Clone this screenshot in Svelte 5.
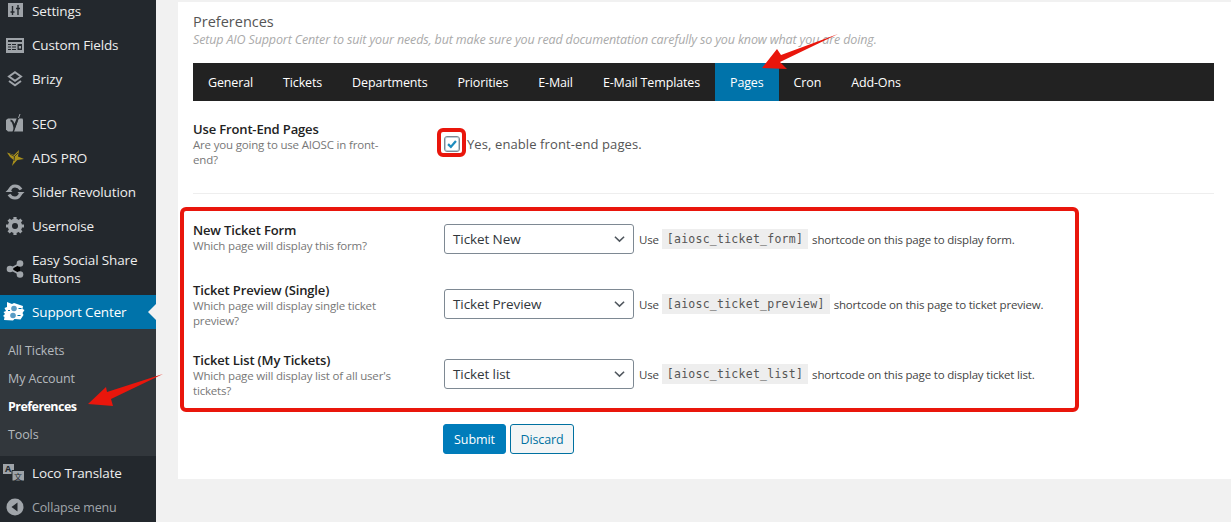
<script>
  const tabs = ["General", "Tickets", "Departments", "Priorities", "E-Mail", "E-Mail Templates", "Pages", "Cron", "Add-Ons"];
  const submenu = ["All Tickets", "My Account", "Preferences", "Tools"];
  const rows = [
    { title: "New Ticket Form", desc: "Which page will display this form?", value: "Ticket New", code: "[aiosc_ticket_form]", after: "shortcode on this page to display form." },
    { title: "Ticket Preview (Single)", desc: "Which page will display single ticket preview?", value: "Ticket Preview", code: "[aiosc_ticket_preview]", after: "shortcode on this page to ticket preview." },
    { title: "Ticket List (My Tickets)", desc: "Which page will display list of all user's tickets?", value: "Ticket list", code: "[aiosc_ticket_list]", after: "shortcode on this page to display ticket list." }
  ];
</script>

<div class="page">
  <aside class="sidebar">
    <div class="item">
      <svg class="icon" viewBox="0 0 20 20"><path fill="#9ea3a8" d="M3 2h15v14H3z"/><path stroke="#23282d" stroke-width="1.400" d="M7.500 5v9M13 4v10M5.500 11h4M11 7.500h4" fill="none"/></svg>
      <span>Settings</span>
    </div>
    <div class="item">
      <svg class="icon" viewBox="0 0 20 20"><path fill="#9ea3a8" d="M1 3h18v15H1z"/><path fill="#23282d" d="M3 5h14v2H3zM3 9h3v1H3zM7 9h4v1H7zM3 11.500h3v1H3zM7 11.500h4v1H7zM3 14h3v1H3zM7 14h4v1H7zM12.500 9H17v6h-4.500z"/><path fill="#9ea3a8" d="M13.800 11H16v2.500h-2.200z"/></svg>
      <span>Custom Fields</span>
    </div>
    <div class="item">
      <svg class="icon" viewBox="0 0 20 20"><path fill="none" stroke="#a0a5aa" stroke-width="2" d="M10 3.200 16 7.500 10 11.800 4 7.500z"/><path fill="none" stroke="#a0a5aa" stroke-width="2" d="M4 12l6 4.300L16 12"/></svg>
      <span>Brizy</span>
    </div>
    <div class="sep"></div>
    <div class="item">
      <svg class="icon" viewBox="0 0 20 20"><path fill="#9ea3a8" d="M3 4.500h14.500L18 6v11.500H3L1 15.500V6z"/><path fill="none" stroke="#23282d" stroke-width="2" d="M5.500 6.500c2 0 3 2.500 3.800 6.500L14 1.500"/><path fill="none" stroke="#23282d" stroke-width="1.400" d="M12 7 8 18.500"/><path fill="none" stroke="#9ea3a8" stroke-width="1" d="M15 0 13.500 4"/></svg>
      <span>SEO</span>
    </div>
    <div class="item">
      <svg class="icon" viewBox="0 0 20 20"><path fill="#a8901c" d="M2 4.500 9 7l5-5-1 6.500 6 2.500-6.500 1-1 .8L7 18l1.500-6L5 9z"/><path fill="none" stroke="#23282d" stroke-width=".8" d="M5 6l4.500 2.500L13 5M9.500 8.500 9 13"/></svg>
      <span>ADS PRO</span>
    </div>
    <div class="item">
      <svg class="icon" viewBox="0 0 20 20"><path fill="none" stroke="#a0a5aa" stroke-width="3.200" d="M4.500 8.500C5.500 5.500 7.500 4 10 4s4.500 1 6 3.500M15.500 11.500C14.500 14.500 12.500 16 10 16s-4.500-1-6-3.500"/><path fill="#a0a5aa" d="M.5 10h7L4 6.500zM19.500 10h-7l3.500 3.500z"/></svg>
      <span>Slider Revolution</span>
    </div>
    <div class="item">
      <svg class="icon" viewBox="0 0 20 20"><circle cx="10" cy="10" r="5.500" fill="none" stroke="#a0a5aa" stroke-width="3.400"/><path stroke="#a0a5aa" stroke-width="3.200" d="M10 1v18M1 10h18M3.600 3.600l12.800 12.800M16.400 3.600 3.600 16.400"/><circle cx="10" cy="10" r="3" fill="#23282d"/></svg>
      <span>Usernoise</span>
    </div>
    <div class="item tall">
      <svg class="icon" viewBox="0 0 20 20"><path stroke="#a0a5aa" stroke-width="1.800" d="M15 4.500 5 10l10 5.500"/><circle cx="15" cy="4.500" r="3.300" fill="#a0a5aa"/><circle cx="5" cy="10" r="3.300" fill="#a0a5aa"/><circle cx="15" cy="15.500" r="3.300" fill="#a0a5aa"/></svg>
      <span>Easy Social Share Buttons</span>
    </div>
    <div class="item current">
      <svg class="icon wide" viewBox="0 0 22 20"><path fill="#fff" d="M4 0l5 2 2-1 9 3-.5 3 2 1-2 3 1 2-3 4.500-6-.5-1.500 1.500L1 18l.5-3L0 14l2-2-1.500-2L3 9 1.500 6 4 5z"/><circle cx="11" cy="6.500" r="2.800" fill="#5a9cc5"/><circle cx="10" cy="13.500" r="2.800" fill="#5a9cc5"/><path fill="#0073aa" d="M15.500 6h3v1h-3zM14.500 13h3v1h-3zM5 8h2v1H5z"/></svg>
      <span>Support Center</span>
      <i class="notch"></i>
    </div>
    <ul class="sub">
      {#each submenu as name}
        <li class:on={name === "Preferences"}>{name}</li>
      {/each}
    </ul>
    <div class="item">
      <svg class="icon wide" viewBox="0 0 22 20"><path fill="#9ea3a8" d="M0 1h11v10H0z"/><path fill="#9ea3a8" stroke="#23282d" d="M9 7.500h12.500V18H9z"/><text x="2" y="9" class="glyph">A</text><text x="11" y="16.500" class="glyph small">文</text></svg>
      <span>Loco Translate</span>
    </div>
    <div class="item collapse">
      <svg class="icon" viewBox="0 0 20 20"><circle cx="10" cy="10" r="8.500" fill="#a0a5aa"/><path fill="#23282d" d="M12.500 5.500v9L6.500 10z"/></svg>
      <span>Collapse menu</span>
    </div>
  </aside>

  <main class="main">
    <section class="card">
      <h1>Preferences</h1>
      <p class="lead">Setup AIO Support Center to suit your needs, but make sure you read documentation carefully so you know what you are doing.</p>

      <nav class="tabs">
        {#each tabs as tab}
          <span class="tab" class:active={tab === "Pages"}>{tab}</span>
        {/each}
      </nav>

      <div class="row first">
        <div class="lbl">
          <strong>Use Front-End Pages</strong>
          <small>Are you going to use AIOSC in front-end?</small>
        </div>
        <label class="check">
          <span class="box">
            <svg viewBox="0 0 16 16"><path fill="none" stroke="#1e8cbe" stroke-width="2.600" d="M3.500 8.200 6.700 11.300 12.500 4.500"/></svg>
          </span>
          Yes, enable front-end pages.
        </label>
      </div>

      <hr />

      <div class="pages">
        {#each rows as r}
          <div class="row">
            <div class="lbl">
              <strong>{r.title}</strong>
              <small>{r.desc}</small>
            </div>
            <div class="ctl">
              <div class="select">
                <span>{r.value}</span>
                <svg viewBox="0 0 12 8"><path fill="none" stroke="#50575e" stroke-width="1.700" d="M1 1.500 6 6.300 11 1.500"/></svg>
              </div>
              <span class="hint">Use</span>
              <code>{r.code}</code>
              <span class="hint">{r.after}</span>
            </div>
          </div>
        {/each}
      </div>

      <div class="actions">
        <button class="btn primary">Submit</button>
        <button class="btn">Discard</button>
      </div>
    </section>
  </main>

  <!-- annotations drawn over the screenshot -->
  <div class="mark mark-box"></div>
  <div class="mark mark-check"></div>
  <svg class="arrows" viewBox="0 0 1231 522">
    <path fill="#e9160c" d="M838 34 781 55 777 49 762 68 787 69 780 62z"/>
    <path fill="#e9160c" d="M163 374 107 392 106 387 88 404 113 406 111 399z"/>
  </svg>
</div>

<style>
  :global(body) {
    margin: 0;
    background: #f1f1f1;
  }

  .page {
    position: relative;
    display: flex;
    height: 522px;
    overflow: hidden;
    font-family: "Open Sans", "Noto Sans", sans-serif;
    font-size: 13px;
    color: #333;
    background: #f1f1f1;
  }

  .sidebar {
    flex: 0 0 156px;
    margin-top: -6px;
    background: #23282d;
    color: #eee;
    font-size: 13.500px;
    letter-spacing: -0.14px;
  }

  .item {
    position: relative;
    display: flex;
    align-items: center;
    height: 34px;
    padding-left: 32px;
    box-sizing: border-box;
    line-height: 18px;
  }
  .item.tall {
    height: 52px;
    padding-right: 8px;
  }
  .item.current {
    background: #0073aa;
    color: #fff;
  }
  .item.collapse {
    padding-top: 2px;
    color: #a0a5aa;
    font-size: 12.500px;
  }
  .icon {
    position: absolute;
    left: 5px;
    top: 50%;
    width: 20px;
    height: 20px;
    margin-top: -10px;
  }
  .icon.wide {
    left: 3px;
    width: 22px;
  }
  .notch {
    position: absolute;
    right: 0;
    top: 50%;
    margin-top: -8px;
    border: 8px solid transparent;
    border-right-color: #f1f1f1;
    border-left-width: 0;
  }
  .glyph {
    font-size: 9px;
    fill: #23282d;
    font-weight: 700;
  }
  .glyph.small {
    font-family: "Noto Sans CJK SC", sans-serif;
    font-size: 8px;
    font-weight: 400;
  }
  .sep {
    height: 11px;
  }

  .sub {
    list-style: none;
    margin: 0;
    padding: 8px 0 7px;
    background: #32373c;
    color: #b4b9be;
    font-size: 12.500px;
    letter-spacing: -0.1px;
  }
  .sub li {
    height: 28px;
    line-height: 28px;
    padding-left: 8px;
  }
  .sub li.on {
    color: #fff;
    font-weight: 700;
    letter-spacing: -0.55px;
  }

  .main {
    flex: 1;
    padding: 2px 0 0 22px;
  }
  .card {
    height: 477px;
    box-sizing: border-box;
    padding: 11px 17px 0 15px;
    background: #fff;
  }
  h1 {
    margin: 0;
    font-size: 14.500px;
    font-weight: 400;
    line-height: 18px;
    color: #555;
  }
  .lead {
    margin: 0 0 15px;
    height: 17px;
    line-height: 17px;
    font-size: 12.500px;
    font-style: italic;
    color: #aaa;
    letter-spacing: -0.14px;
    white-space: nowrap;
  }
  .tabs {
    display: flex;
    height: 38px;
    background: #222;
  }
  .tab {
    padding: 0 15px;
    line-height: 39px;
    color: #fff;
    font-size: 12.500px;
    letter-spacing: -0.14px;
  }
  .tab.active {
    background: #0073aa;
  }

  .row {
    display: flex;
    align-items: center;
  }
  .row.first {
    align-items: flex-start;
    padding-top: 20px;
  }
  .lbl {
    flex: 0 0 251px;
    box-sizing: border-box;
    padding-right: 48px;
  }
  .lbl strong {
    display: block;
    font-size: 13px;
    line-height: 16px;
    font-weight: 600;
    color: #222;
    letter-spacing: -0.15px;
  }
  .lbl small {
    display: block;
    font-size: 11.500px;
    line-height: 15px;
    color: #777;
    letter-spacing: -0.18px;
  }
  .check {
    display: flex;
    align-items: center;
    gap: 7px;
    padding-top: 14px;
    font-size: 13px;
    color: #555;
    letter-spacing: 0.1px;
  }
  .box {
    width: 16px;
    height: 16px;
    box-sizing: border-box;
    border: 1px solid #7e8993;
    border-radius: 3px;
    background: #fff;
    box-shadow: inset 0 0 0 1px #b8ced8;
  }
  .box svg {
    display: block;
    width: 14px;
    height: 14px;
  }
  hr {
    margin: 26px 0 0;
    border: 0;
    border-top: 1px solid #eee;
  }
  .pages {
    display: flex;
    flex-direction: column;
    gap: 24px;
    padding-top: 24px;
  }
  .pages .row:first-child {
    min-height: 40px;
  }
  .pages .row:first-child .lbl {
    padding-bottom: 2px;
  }
  .pages .row:first-child .ctl {
    padding: 2px 0 0;
  }
  .ctl {
    display: flex;
    align-items: center;
    padding-bottom: 2px;
    font-size: 11.500px;
    color: #444;
    letter-spacing: -0.18px;
  }
  .select {
    display: flex;
    align-items: center;
    justify-content: space-between;
    box-sizing: border-box;
    width: 190px;
    height: 30px;
    padding: 0 8px;
    border: 1px solid #7e8993;
    border-radius: 3px;
    font-size: 13.500px;
    color: #32373c;
    letter-spacing: -0.1px;
  }
  .select svg {
    width: 11px;
    height: 8px;
  }
  .hint:first-of-type {
    margin-left: 5px;
  }
  code {
    margin: 0 4px 0 3px;
    padding: 0 5px;
    height: 20px;
    line-height: 20px;
    background: #eee;
    font-family: "DejaVu Sans Mono", "Liberation Mono", monospace;
    font-size: 11.500px;
    letter-spacing: 0.25px;
    color: #555;
  }
  .actions {
    display: flex;
    gap: 4px;
    margin: 26px 0 0 250px;
  }
  .btn {
    height: 30px;
    padding: 0;
    width: 64px;
    border: 1px solid #0071a1;
    border-radius: 3px;
    background: #f3f5f6;
    color: #0071a1;
    font: inherit;
    font-size: 12.500px;
    letter-spacing: -0.1px;
  }
  .btn.primary {
    width: 63px;
    background: #007cba;
    border-color: #007cba;
    color: #fff;
  }

  .mark {
    position: absolute;
    box-sizing: border-box;
    border: 4px solid #e9160c;
  }
  .mark-box {
    left: 180px;
    top: 207px;
    width: 899px;
    height: 205px;
    border-radius: 6px;
  }
  .mark-check {
    left: 437px;
    top: 128px;
    width: 29px;
    height: 29px;
    border-radius: 6px;
  }
  .arrows {
    position: absolute;
    left: 0;
    top: 0;
    width: 1231px;
    height: 522px;
    pointer-events: none;
  }
</style>
